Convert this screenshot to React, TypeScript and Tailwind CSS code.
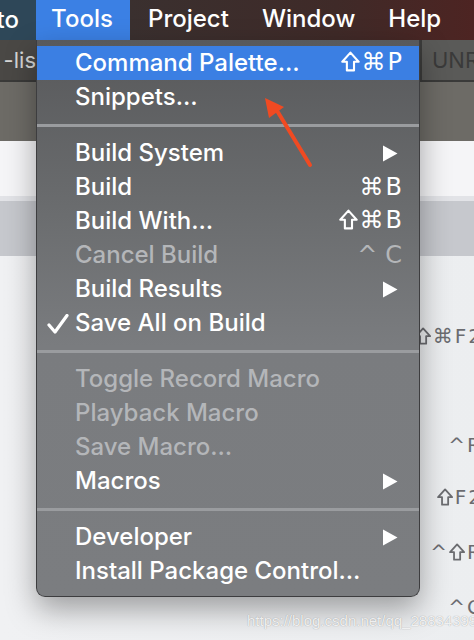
import React from 'react'

type Item =
  | { kind: 'sep' }
  | { kind: 'item'; label: string; shortcut?: string; submenu?: boolean; disabled?: boolean; checked?: boolean; active?: boolean }

const items: Item[] = [
  { kind: 'item', label: 'Command Palette…', shortcut: '⇧⌘P', active: true },
  { kind: 'item', label: 'Snippets…' },
  { kind: 'sep' },
  { kind: 'item', label: 'Build System', submenu: true },
  { kind: 'item', label: 'Build', shortcut: '⌘B' },
  { kind: 'item', label: 'Build With…', shortcut: '⇧⌘B' },
  { kind: 'item', label: 'Cancel Build', shortcut: '^ C', disabled: true },
  { kind: 'item', label: 'Build Results', submenu: true },
  { kind: 'item', label: 'Save All on Build', checked: true },
  { kind: 'sep' },
  { kind: 'item', label: 'Toggle Record Macro', disabled: true },
  { kind: 'item', label: 'Playback Macro', disabled: true },
  { kind: 'item', label: 'Save Macro…', disabled: true },
  { kind: 'item', label: 'Macros', submenu: true },
  { kind: 'sep' },
  { kind: 'item', label: 'Developer', submenu: true },
  { kind: 'item', label: 'Install Package Control…' },
]

// outline shift arrow, drawn since the font glyph is too thin
function Shift({ size = 20 }: { size?: number }) {
  return (
    <svg width={size * 0.9} height={size} viewBox="0 0 18 20" className="inline-block shrink-0">
      <path
        d="M9 1.5 L16.8 10.2 L12.4 10.2 L12.4 18.5 L5.6 18.5 L5.6 10.2 L1.2 10.2 Z"
        fill="none"
        stroke="currentColor"
        strokeWidth="2"
        strokeLinejoin="round"
      />
    </svg>
  )
}

function Keys({ text, shiftSize }: { text: string; shiftSize?: number }) {
  return (
    <span className="inline-flex items-center gap-[2px] whitespace-nowrap">
      {text.split('').map((ch, i) =>
        ch === '⇧' ? (
          <Shift key={i} size={shiftSize} />
        ) : ch === ' ' ? (
          <span key={i} className="w-[4px]" />
        ) : (
          <span key={i}>{ch}</span>
        )
      )}
    </span>
  )
}

function SubArrow() {
  return (
    <svg width="16" height="17" viewBox="0 0 16 17" className="mr-[4px]">
      <path d="M1 0.5 L15.5 8.5 L1 16.5 Z" fill="#ffffff" />
    </svg>
  )
}

function Check() {
  return (
    <svg width="22" height="20" viewBox="0 0 22 20" className="absolute left-[10px] top-[8px]">
      <path d="M2 11 L8 18 L20 1.5" fill="none" stroke="#ffffff" strokeWidth="3.2" strokeLinecap="round" strokeLinejoin="round" />
    </svg>
  )
}

function MenuRow({ item }: { item: Extract<Item, { kind: 'item' }> }) {
  const color = item.disabled ? 'text-[#b4b6b9]' : 'text-white'
  return (
    <div
      className={`relative flex items-center h-[34px] pl-[38px] pr-[17px] ${color} ${
        item.active ? 'bg-[#3b7fe3]' : ''
      }`}
    >
      {item.checked && <Check />}
      <span className="flex-1 whitespace-nowrap">{item.label}</span>
      {item.shortcut && (
        <span className="font-['DejaVu_Sans','Inter',sans-serif] text-[24px]">
          <Keys text={item.shortcut} shiftSize={21} />
        </span>
      )}
      {item.submenu && <SubArrow />}
    </div>
  )
}

function ToolsMenu() {
  return (
    <div className="absolute left-[36px] top-[40px] w-[384px] pt-[6px] pb-[8px] rounded-b-[9px] border border-t-0 border-[#3d3d3f] bg-[linear-gradient(180deg,#58595b_0%,#6a6c6e_30%,#7a7c7f_55%,#7b7d80_100%)] shadow-[0_12px_30px_rgba(0,0,0,0.35)] text-[24px] font-medium leading-none">
      {items.map((item, i) =>
        item.kind === 'sep' ? (
          <div key={i} className="h-[22px] flex items-center">
            <div className="w-full h-[3px] bg-[#9a9c9f]" />
          </div>
        ) : (
          <MenuRow key={i} item={item} />
        )
      )}
    </div>
  )
}

export default function App() {
  return (
    <div className="relative w-[474px] h-[640px] overflow-hidden flex flex-col font-['Inter','Liberation_Sans',sans-serif] bg-[#eeeff1]">
      {/* menu bar */}
      <div className="flex h-[40px] text-white text-[24px] font-medium leading-none">
        <div className="w-[36px] bg-[#2e4758] flex items-center justify-end overflow-hidden pr-[17px]">
          <span className="whitespace-nowrap">to</span>
        </div>
        <div className="w-[94px] bg-[#3b80e4] flex items-center justify-center pb-[2px] pr-[2px]">Tools</div>
        <div className="flex-1 flex items-center gap-[33px] pl-[18px] pb-[2px] bg-[linear-gradient(90deg,#3a302f_0%,#3f2a28_60%,#4d2422_100%)]">
          <span>Project</span>
          <span>Window</span>
          <span>Help</span>
        </div>
      </div>

      {/* tab strip */}
      <div className="flex h-[42px] border-b-2 border-[#3a3a39]">
        <div className="w-[36px] bg-[#4a4845] flex items-center justify-end overflow-hidden">
          <span className="text-[#d6d6d6] text-[22px] whitespace-nowrap">-lis</span>
        </div>
        <div className="flex-1 bg-[#4a4a48]" />
        <div className="w-[54px] bg-[#5a5a58] border-l-2 border-[#3c3c3b] flex items-center pl-[10px] overflow-hidden">
          <span className="text-[#3a3a3a] text-[22px] whitespace-nowrap">UNRE</span>
        </div>
      </div>

      <div className="h-[59px] bg-[#6d6b66]" />
      <div className="h-[60px] bg-[#f5f5f7] border-b-[5px] border-[#e2e3e7]" />
      <div className="h-[55px] bg-[#c6c8cd]" />

      {/* shortcuts column on the right */}
      <div className="flex-1 flex flex-col items-end -mr-[7px] text-[#6b6c70] text-[20px] leading-none font-['DejaVu_Sans',sans-serif] bg-[linear-gradient(90deg,#f0f1f3_0%,#eceef0_100%)]">
        <span className="mt-[70px]"><Keys text="⇧⌘F2" shiftSize={18} /></span>
        <span className="mt-[87px]"><Keys text="^R" /></span>
        <span className="mt-[32px]"><Keys text="⇧F2" shiftSize={18} /></span>
        <span className="mt-[33px]"><Keys text="^⇧R" shiftSize={18} /></span>
        <span className="mt-[35px]"><Keys text="^C" /></span>
      </div>

      <ToolsMenu />

      {/* red annotation arrow */}
      <svg className="absolute left-[255px] top-[92px]" width="64" height="82" viewBox="0 0 64 82">
        <path d="M55 73 L21 17" stroke="#f04a22" strokeWidth="4" strokeLinecap="round" />
        <path d="M10 6 L29 15 L14 26 Z" fill="#f04a22" />
      </svg>

      <div className="absolute left-[247px] top-[610px] text-[15px] text-white/85 whitespace-nowrap font-['Liberation_Sans',sans-serif] [text-shadow:0_0_1px_rgba(0,0,0,0.4)]">
        https://blog.csdn.net/qq_28834399
      </div>
    </div>
  )
}
